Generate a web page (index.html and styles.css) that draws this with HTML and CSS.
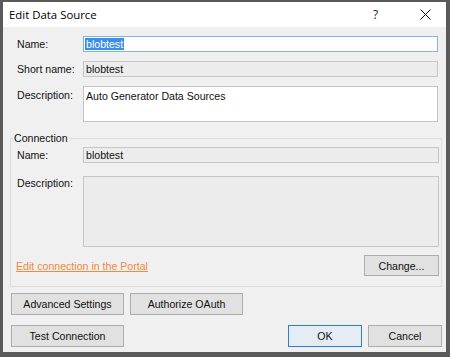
FILE: index.html
```html
<!DOCTYPE html>
<html lang="en">
<head>
  <meta charset="UTF-8">
  <title>Edit Data Source</title>
  <link rel="stylesheet" href="styles.css">
</head>
<body>
  <div class="window">
    <div class="titlebar">
      <span class="title">Edit Data Source</span>
      <span class="help">?</span>
      <span class="close">
        <svg width="11" height="11" viewBox="0 0 11 11">
          <path d="M0.5 0.5 L10.5 10.5 M10.5 0.5 L0.5 10.5" stroke="#111" stroke-width="1" fill="none"/>
        </svg>
      </span>
    </div>

    <div class="content">
      <div class="fields">
        <div class="row">
          <label>Name:</label>
          <div class="box focused"><span class="selected">blobtest</span></div>
        </div>
        <div class="row">
          <label>Short name:</label>
          <div class="box readonly">blobtest</div>
        </div>
        <div class="row multi">
          <label>Description:</label>
          <div class="box area">Auto Generator Data Sources</div>
        </div>
      </div>

      <fieldset class="group">
        <legend>Connection</legend>
        <div class="row">
          <label>Name:</label>
          <div class="box readonly">blobtest</div>
        </div>
        <div class="row multi">
          <label>Description:</label>
          <div class="box readonly tall"></div>
        </div>
        <div class="group-footer">
          <a href="#" class="portal-link">Edit connection in the Portal</a>
          <button class="btn small">Change...</button>
        </div>
      </fieldset>

      <div class="btn-row">
        <button class="btn">Advanced Settings</button>
        <button class="btn">Authorize OAuth</button>
      </div>
      <div class="btn-row last">
        <button class="btn">Test Connection</button>
        <span class="spacer"></span>
        <button class="btn short default">OK</button>
        <button class="btn short">Cancel</button>
      </div>
    </div>
  </div>
</body>
</html>
```

FILE: styles.css
```css
* {
  margin: 0;
  padding: 0;
  box-sizing: border-box;
}

body {
  width: 450px;
  height: 357px;
  background: #5a5a5a;
  padding: 2px 4px 5px 3px;
  font-family: "Liberation Sans", Arial, sans-serif;
  font-size: 10.6px;
  color: #111;
  overflow: hidden;
}

.window {
  height: 100%;
  display: flex;
  flex-direction: column;
  background: #f0f0f0;
}

.titlebar {
  height: 27px;
  background: #fff;
  display: flex;
  align-items: center;
  padding-left: 6px;
}

.title {
  font-family: "Open Sans", sans-serif;
  font-size: 11.4px;
  color: #000;
  flex: 1;
}

.help {
  font-family: "Open Sans", sans-serif;
  font-size: 12px;
  width: 10px;
  margin-right: 37px;
  color: #222;
}

.close {
  display: flex;
  margin-right: 15px;
}

.content {
  flex: 1;
  padding: 0 4px 5px 8px;
  display: flex;
  flex-direction: column;
}

.fields {
  padding: 9px 4px 0 0;
  display: flex;
  flex-direction: column;
  gap: 9px;
}

.row {
  display: flex;
  align-items: center;
}

.row label {
  width: 72px;
  padding-left: 6px;
  flex-shrink: 0;
}

.row.multi {
  align-items: flex-start;
}

.row.multi label {
  padding-top: 3px;
}

.box {
  flex: 1;
  height: 16px;
  line-height: 14px;
  padding: 0 2px;
  border: 1px solid #bdbdbd;
  background: #fff;
  white-space: nowrap;
}

.box.focused {
  border-color: #7eb4ea;
}

.box.readonly {
  background: #ececec;
  border-color: #c6c6c6;
}

.box.area {
  height: 36px;
  padding-top: 2px;
  border-color: #c4c4c4;
}

.box.tall {
  height: 71px;
}

.selected {
  background: #3a8ee6;
  color: #fff;
  display: inline-block;
  line-height: 12px;
  margin-left: -1px;
  padding: 0 1px;
}

.group {
  margin: 10px 0 0 -1px;
  border: 1px solid #dcdcdc;
  padding: 0 2px 10px 6px;
}

.group legend {
  padding: 0 1px;
  margin-left: -4px;
  line-height: 12px;
  color: #111;
}

.group .row {
  margin-top: 3px;
}

.group .row label {
  width: 66px;
  padding-left: 0;
}

.group .row.multi {
  margin-top: 13px;
}

.group .row.multi label {
  padding-top: 1px;
}

.group-footer {
  display: flex;
  align-items: center;
  justify-content: space-between;
  margin-top: 8px;
}

.portal-link {
  color: #ef8a3e;
  margin-left: -1px;
}

.btn {
  font-family: inherit;
  font-size: inherit;
  color: #111;
  background: #e1e1e1;
  border: 1px solid #adadad;
  width: 113px;
  height: 22px;
}

.btn.small {
  width: 75px;
  height: 21px;
}

.btn.short {
  width: 74px;
}

.btn.default {
  border-color: #2f7fd1;
  background: #e5ecf4;
}

.btn-row {
  display: flex;
  gap: 6px;
  margin-top: 6px;
}

.btn-row.last {
  margin-top: 10px;
}

.spacer {
  flex: 1;
}
```
